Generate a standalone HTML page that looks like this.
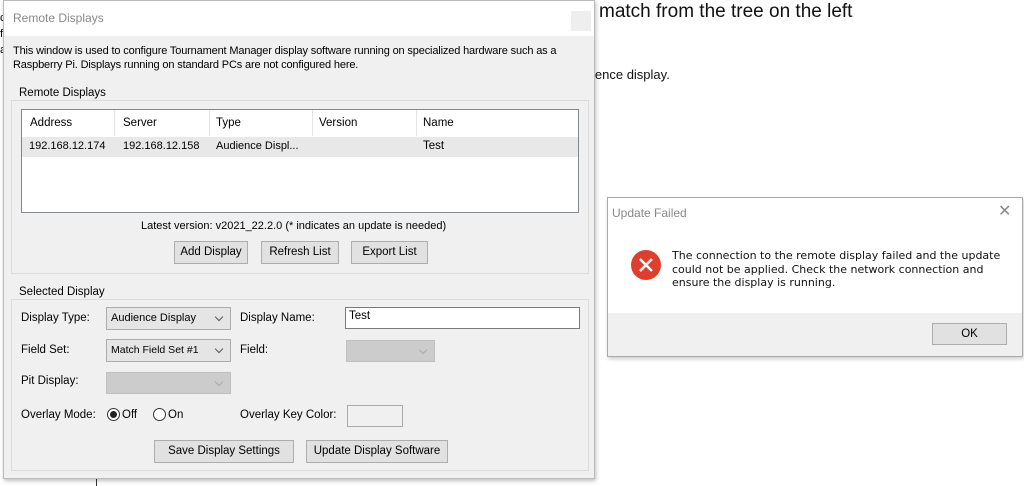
<!DOCTYPE html>
<html><head><style>
*{box-sizing:border-box}
body{margin:0;width:1024px;height:486px;background:#fff;position:relative;overflow:hidden;font-family:"Liberation Sans",sans-serif;font-size:11.5px;color:#000}
.a{position:absolute;white-space:nowrap}
.btn{position:absolute;background:#e1e1e1;border:1px solid #adadad;text-align:center;line-height:20px;font-size:11.5px}
.combo{position:absolute;background:#e5e5e5;border:1px solid #acacac;padding-left:4px;line-height:20px;font-size:11px}
.combo.dis{background:#ccc;border-color:#bfbfbf}
.combo:after{content:"";position:absolute;right:8px;top:6px;width:5px;height:5px;border-right:1px solid #555;border-bottom:1px solid #555;transform:rotate(45deg)}
.combo.dis:after{border-color:#aaa}
.grp{position:absolute;border:1px solid #dcdcdc}
.lbl{position:absolute;background:#f0f0f0;padding:0 2px}
</style></head><body>
<div class="a" style="left:599px;top:1px;font-size:19px;color:#111">match from the tree on the left</div>
<div class="a" style="left:592px;top:67px;font-size:13px;color:#111">ience display.</div>
<div class="a" style="left:0;top:10px;font-size:11px;line-height:16px">c<br>fi<br>a</div>
<div class="a" style="left:96px;top:478px;width:1px;height:8px;background:#333"></div>

<div class="a" style="left:3px;top:0px;width:592px;height:479px;background:#f0f0f0;border:1px solid #bbb;box-shadow:1px 2px 4px rgba(0,0,0,.25)">
 <div class="a" style="left:0;top:0;width:590px;height:35px;background:#fff"></div>
 <div class="a" style="left:9px;top:10px;font-size:12px;color:#888">Remote Displays</div>
 <div class="a" style="left:567px;top:10px;width:20px;height:20px;background:#eee"></div>
 <div class="a" style="left:9px;top:43px;line-height:14px;font-size:11px;letter-spacing:-0.15px">This window is used to configure Tournament Manager display software running on specialized hardware such as a<br>Raspberry Pi. Displays running on standard PCs are not configured here.</div>
 <div class="grp" style="left:7px;top:99px;width:578px;height:174px"></div>
 <div class="lbl" style="left:13px;top:86px">Remote Displays</div>
 <div class="a" style="left:17px;top:108px;width:558px;height:104px;background:#fff;border:1px solid #828790">
  <div class="a" style="left:0;top:27px;width:556px;height:20px;background:#e8e8e8"></div>
  <div class="a" style="left:8px;top:7px">Address</div><div class="a" style="left:101px;top:7px">Server</div><div class="a" style="left:194px;top:7px">Type</div><div class="a" style="left:297px;top:7px">Version</div><div class="a" style="left:401px;top:7px">Name</div>
  <div class="a" style="left:92px;top:0;width:1px;height:26px;background:#e5e5e5"></div><div class="a" style="left:187px;top:0;width:1px;height:26px;background:#e5e5e5"></div><div class="a" style="left:290px;top:0;width:1px;height:26px;background:#e5e5e5"></div><div class="a" style="left:394px;top:0;width:1px;height:26px;background:#e5e5e5"></div>
  <div class="a" style="left:7px;top:30px;font-size:11px">192.168.12.174</div><div class="a" style="left:101px;top:30px;font-size:11px">192.168.12.158</div><div class="a" style="left:194px;top:30px;font-size:11px">Audience Displ...</div><div class="a" style="left:401px;top:30px">Test</div>
 </div>
 <div class="a" style="left:137px;top:219px;font-size:11px">Latest version: v2021_22.2.0 (* indicates an update is needed)</div>
 <div class="btn" style="left:170px;top:240px;width:74px;height:23px">Add Display</div>
 <div class="btn" style="left:257px;top:240px;width:78px;height:23px">Refresh List</div>
 <div class="btn" style="left:347px;top:240px;width:77px;height:23px">Export List</div>

 <div class="grp" style="left:7px;top:298px;width:578px;height:172px"></div>
 <div class="lbl" style="left:13px;top:285px">Selected Display</div>
 <div class="a" style="left:17px;top:311px">Display Type:</div>
 <div class="combo" style="left:102px;top:306px;width:125px;height:23px">Audience Display</div>
 <div class="a" style="left:236px;top:311px">Display Name:</div>
 <div class="a" style="left:341px;top:306px;width:235px;height:22px;background:#fff;border:1px solid #7a7a7a;padding:2px 3px">Test</div>
 <div class="a" style="left:17px;top:343px">Field Set:</div>
 <div class="combo" style="left:102px;top:338px;width:125px;height:23px;font-size:10.5px">Match Field Set #1</div>
 <div class="a" style="left:236px;top:343px">Field:</div>
 <div class="combo dis" style="left:342px;top:339px;width:89px;height:22px"></div>
 <div class="a" style="left:17px;top:374px">Pit Display:</div>
 <div class="combo dis" style="left:102px;top:371px;width:125px;height:22px"></div>
 <div class="a" style="left:17px;top:408px">Overlay Mode:</div>
 <div class="a" style="left:103px;top:407px;width:13px;height:13px;border:1px solid #333;border-radius:50%;background:#fff"><div class="a" style="left:2px;top:2px;width:7px;height:7px;border-radius:50%;background:#222"></div></div>
 <div class="a" style="left:118px;top:408px">Off</div>
 <div class="a" style="left:149px;top:407px;width:13px;height:13px;border:1px solid #333;border-radius:50%;background:#fff"></div>
 <div class="a" style="left:164px;top:408px">On</div>
 <div class="a" style="left:236px;top:408px">Overlay Key Color:</div>
 <div class="a" style="left:343px;top:404px;width:56px;height:22px;border:1px solid #aaa;background:#f0f0f0"></div>
 <div class="btn" style="left:150px;top:439px;width:140px;height:23px">Save Display Settings</div>
 <div class="btn" style="left:302px;top:439px;width:142px;height:23px">Update Display Software</div>
</div>

<div class="a" style="left:607px;top:197px;width:416px;height:160px;background:#fff;border:1px solid #aaa;box-shadow:1px 2px 4px rgba(0,0,0,.2)">
 <div class="a" style="left:4px;top:8px;font-size:12px;color:#888">Update Failed</div>
 <div class="a" style="left:390px;top:3px;font-size:16px;color:#888">✕</div>
 <svg class="a" style="left:22px;top:51px" width="32" height="32" viewBox="0 0 32 32"><circle cx="16" cy="16" r="15" fill="#e03e2d"/><path d="M10 10L22 22M22 10L10 22" stroke="#fff" stroke-width="2.5"/></svg>
 <div class="a" style="left:64px;top:51px;font-size:11px;line-height:13.5px;font-family:'DejaVu Sans',sans-serif;color:#111">The connection to the remote display failed and the update<br>could not be applied. Check the network connection and<br>ensure the display is running.</div>
 <div class="a" style="left:0;top:115px;width:414px;height:43px;background:#f0f0f0"></div>
 <div class="btn" style="left:324px;top:125px;width:75px;height:22px;background:#e1e1e1">OK</div>
</div>
</body></html>
